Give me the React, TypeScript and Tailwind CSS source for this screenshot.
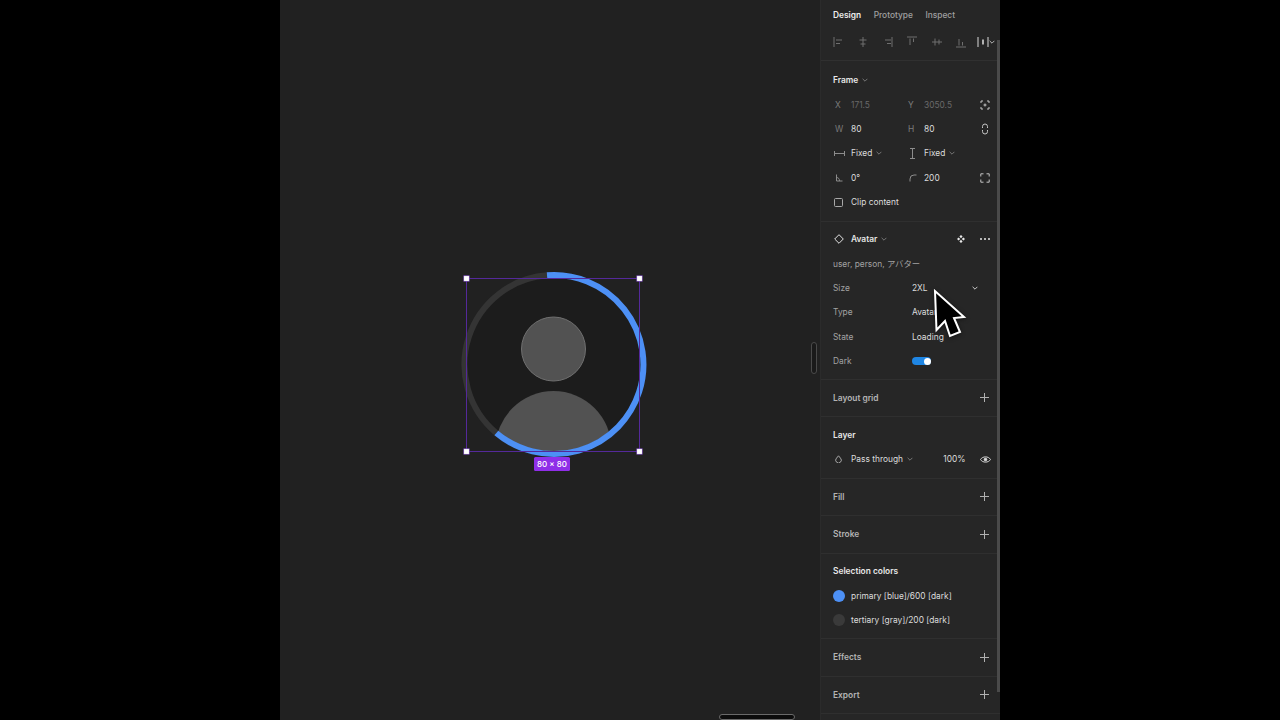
import React from "react";

type P = { children?: React.ReactNode; className?: string };

const Ico = ({ children, className = "", w = 12, h = 12 }: P & { w?: number; h?: number }) => (
  <svg width={w} height={h} viewBox={`0 0 ${w} ${h}`} fill="none" stroke="currentColor" strokeWidth="1" className={className}>
    {children}
  </svg>
);

const Chevron = ({ className = "text-[#8a8a8a]" }: P) => (
  <svg width="6" height="4" viewBox="0 0 6 4" fill="none" stroke="currentColor" strokeWidth="0.8" className={`ml-[4px] ${className}`}>
    <path d="M0.6 0.8 L3 3.2 L5.4 0.8" />
  </svg>
);

const Plus = () => (
  <svg width="9" height="9" viewBox="0 0 9 9" stroke="#b0b0b0" strokeWidth="1">
    <path d="M4.5 0 V9 M0 4.5 H9" />
  </svg>
);

const Section = ({ children, className = "" }: P) => (
  <div className={`flex flex-col justify-center border-b border-[#2f2f2f] ${className}`}>{children}</div>
);

const Row = ({ children, className = "" }: P) => (
  <div className={`flex h-[24.4px] items-center pl-[12px] shrink-0 ${className}`}>{children}</div>
);

const Cell = ({ icon, children, wide }: { icon?: React.ReactNode; children?: React.ReactNode; wide?: boolean }) => (
  <div className={`flex items-center ${wide ? "w-[73px]" : "w-[72px]"}`}>
    <div className="flex w-[18px] shrink-0 items-center justify-start pl-[1px] text-[#8c8c8c]">{icon}</div>
    {children}
  </div>
);

const Letter = ({ children }: P) => <span className="w-[10px] pl-[1px] text-[#7c7c7c]">{children}</span>;

const EndIcon = ({ children }: P) => <div className="flex w-[14px] items-center justify-center text-[#c4c4c4]">{children}</div>;

const Title = ({ children }: P) => <span className="font-semibold text-[#e8e8e8]">{children}</span>;
const SubTitle = ({ children }: P) => <span className="font-semibold text-[#b4b4b4]">{children}</span>;

const AddRow = ({ label }: { label: string }) => (
  <Row>
    <div className="flex-1">
      <SubTitle>{label}</SubTitle>
    </div>
    <div className="mr-[11px] flex w-[9px]">
      <Plus />
    </div>
  </Row>
);

const Prop = ({ label, value, extra }: { label: string; value: React.ReactNode; extra?: React.ReactNode }) => (
  <Row>
    <span className="w-[79px] text-[#a2a2a2]">{label}</span>
    <span className="w-[60px] text-[#dcdcdc]">{value}</span>
    {extra}
  </Row>
);

const AlignIcons = () => (
  <div className="flex h-[24px] items-center pl-[12px] text-[#6f6f6f]">
    <div className="flex w-[24.4px]"><Ico><path d="M1 1V11M3 4H9M3 7.5H7" /></Ico></div>
    <div className="flex w-[24.4px]"><Ico><path d="M6 1V11M2.5 4H9.5M3.5 8H8.5" /></Ico></div>
    <div className="flex w-[24.4px]"><Ico><path d="M10 1V11M3 4H9M5 7.5H9" /></Ico></div>
    <div className="flex w-[24.4px]"><Ico><path d="M1 1H11M4 2.5V9M7.5 2.5V6" /></Ico></div>
    <div className="flex w-[24.4px]"><Ico><path d="M1 6H11M4 2.5V9.5M8 3.5V8.5" /></Ico></div>
    <div className="flex w-[22px]"><Ico><path d="M1 11H11M4 3V9.5M7.5 6V9.5" /></Ico></div>
    <div className="flex items-center text-[#d8d8d8]">
      <Ico><path d="M1 1V11M11 1V11" /><path d="M6 3.5V8.5" strokeWidth="1.6" /></Ico>
      <svg width="6" height="4" viewBox="0 0 6 4" fill="none" stroke="currentColor" strokeWidth="0.8" className="ml-[0.5px]"><path d="M0.6 0.8 L3 3.2 L5.4 0.8" /></svg>
    </div>
  </div>
);

const Panel = () => (
  <aside className="relative flex h-full w-[180px] shrink-0 flex-col overflow-hidden border-l border-[#2b2b2b] bg-[#262626] text-[8.4px] leading-none">
    <div className="absolute right-0 top-[40px] h-[652px] w-[3px] bg-[#4a4a4a]" />
    <div className="flex h-[61px] shrink-0 flex-col border-b border-[#303030]">
      <div className="flex h-[30px] items-center gap-[12.5px] pl-[12px] font-medium">
        <span className="font-semibold text-[#ececec]">Design</span>
        <span className="text-[#a0a0a0]">Prototype</span>
        <span className="text-[#a0a0a0]">Inspect</span>
      </div>
      <AlignIcons />
    </div>

    <Section className="h-[160.8px] shrink-0 pt-[0.8px]">
      <Row>
        <Title>Frame</Title>
        <Chevron />
      </Row>
      <Row>
        <Cell wide icon={<Letter>X</Letter>}><span className="text-[#696969]">171.5</span></Cell>
        <Cell icon={<Letter>Y</Letter>}><span className="text-[#696969]">3050.5</span></Cell>
        <EndIcon>
          <Ico w={10} h={10}><path d="M1 3V1H3M7 1H9V3M9 7V9H7M3 9H1V7M3.5 5H6.5M5 3.5V6.5" /></Ico>
        </EndIcon>
      </Row>
      <Row>
        <Cell wide icon={<Letter>W</Letter>}><span className="text-[#dcdcdc]">80</span></Cell>
        <Cell icon={<Letter>H</Letter>}><span className="text-[#dcdcdc]">80</span></Cell>
        <EndIcon>
          <Ico w={8} h={12}><path d="M1.5 5V3.5A2.5 2.5 0 0 1 6.5 3.5V5M1.5 7V8.5A2.5 2.5 0 0 0 6.5 8.5V7" /></Ico>
        </EndIcon>
      </Row>
      <Row>
        <Cell wide icon={<Ico w={11} h={7}><path d="M0.5 1V6M10.5 1V6M0.5 3.5H10.5" /></Ico>}>
          <span className="text-[#dcdcdc]">Fixed</span><Chevron />
        </Cell>
        <Cell icon={<Ico w={7} h={11} className="ml-[2px]"><path d="M1 0.5H6M1 10.5H6M3.5 0.5V10.5" /></Ico>}>
          <span className="text-[#dcdcdc]">Fixed</span><Chevron />
        </Cell>
      </Row>
      <Row>
        <Cell wide icon={<Ico w={8} h={8} className="ml-[1px]"><path d="M1.5 0.5V7H7.5M1.5 3.5C3.5 3.5 4.5 5 4.5 7" /></Ico>}><span className="text-[#dcdcdc]">0°</span></Cell>
        <Cell icon={<Ico w={8} h={8} className="ml-[2px]"><path d="M1 7.5V5A4 4 0 0 1 5 1H7.5" /></Ico>}><span className="text-[#dcdcdc]">200</span></Cell>
        <EndIcon>
          <Ico w={10} h={10}><path d="M0.8 3.5V0.8H3.5M6.5 0.8H9.2V3.5M9.2 6.5V9.2H6.5M3.5 9.2H0.8V6.5" /></Ico>
        </EndIcon>
      </Row>
      <Row>
        <div className="flex w-[18px] shrink-0 items-center pl-[1px]">
          <div className="h-[9px] w-[9px] rounded-[1.5px] border border-[#a8a8a8]" />
        </div>
        <span className="text-[#dcdcdc]">Clip content</span>
      </Row>
    </Section>

    <Section className="h-[158px] shrink-0">
      <Row className="pr-[10px]">
        <div className="flex w-[18px] shrink-0 items-center pl-[1px] text-[#e4e4e4]">
          <Ico w={10} h={10}><path d="M5 0.7L9.3 5L5 9.3L0.7 5Z" /></Ico>
        </div>
        <span className="font-semibold text-[#e4e4e4]">Avatar</span>
        <Chevron />
        <div className="ml-auto flex items-center gap-[15px] text-[#e8e8e8]">
          <svg width="8" height="8" viewBox="0 0 8 8" fill="currentColor"><path d="M4 0L5.6 1.6L4 3.2L2.4 1.6ZM4 4.8L5.6 6.4L4 8L2.4 6.4ZM1.6 2.4L3.2 4L1.6 5.6L0 4ZM6.4 2.4L8 4L6.4 5.6L4.8 4Z" /></svg>
          <svg width="10" height="2" viewBox="0 0 10 2" fill="currentColor"><circle cx="1" cy="1" r="1" /><circle cx="5" cy="1" r="1" /><circle cx="9" cy="1" r="1" /></svg>
        </div>
      </Row>
      <Row>
        <span className="text-[#a2a2a2]">user, person, アバター</span>
      </Row>
      <Prop
        label="Size"
        value="2XL"
        extra={
          <svg width="6" height="4" viewBox="0 0 6 4" fill="none" stroke="#dcdcdc" strokeWidth="0.9"><path d="M0.6 0.8 L3 3.2 L5.4 0.8" /></svg>
        }
      />
      <Prop label="Type" value="Avatar" />
      <Prop label="State" value="Loading" />
      <Row>
        <span className="w-[79px] text-[#a2a2a2]">Dark</span>
        <div className="flex h-[8px] w-[19px] items-center justify-end rounded-full bg-[#1f86e4] pr-[0.5px]">
          <div className="h-[7px] w-[7px] rounded-full bg-white" />
        </div>
      </Row>
    </Section>

    <Section className="h-[37px] shrink-0"><AddRow label="Layout grid" /></Section>

    <Section className="h-[62px] shrink-0">
      <Row><Title>Layer</Title></Row>
      <Row className="pr-[9.5px]">
        <div className="flex w-[18px] shrink-0 items-center pl-[2px] text-[#a8a8a8]">
          <Ico w={7} h={8}><path d="M3.5 0.8L5.5 3.2A2.8 2.8 0 1 1 1.5 3.2Z" /></Ico>
        </div>
        <span className="text-[#dcdcdc]">Pass through</span>
        <Chevron />
        <span className="ml-auto text-[#dcdcdc]">100%</span>
        <svg width="11" height="7" viewBox="0 0 11 7" fill="none" stroke="#e4e4e4" strokeWidth="0.9" className="ml-[14px]">
          <path d="M0.5 3.5C2.5 0 8.5 0 10.5 3.5C8.5 7 2.5 7 0.5 3.5Z" />
          <circle cx="5.5" cy="3.5" r="1.3" fill="#e4e4e4" />
        </svg>
      </Row>
    </Section>

    <Section className="h-[37px] shrink-0"><AddRow label="Fill" /></Section>
    <Section className="h-[38px] shrink-0"><AddRow label="Stroke" /></Section>

    <Section className="h-[85px] shrink-0">
      <Row><Title>Selection colors</Title></Row>
      <Row>
        <div className="flex w-[18px] shrink-0 items-center">
          <div className="h-[12px] w-[12px] rounded-full bg-[#4d90f5]" />
        </div>
        <span className="text-[#dcdcdc]">primary [blue]/600 [dark]</span>
      </Row>
      <Row>
        <div className="flex w-[18px] shrink-0 items-center">
          <div className="h-[12px] w-[12px] rounded-full bg-[#3a3a3a]" />
        </div>
        <span className="text-[#dcdcdc]">tertiary [gray]/200 [dark]</span>
      </Row>
    </Section>

    <Section className="h-[38px] shrink-0"><AddRow label="Effects" /></Section>
    <Section className="h-[37px] shrink-0"><AddRow label="Export" /></Section>
  </aside>
);

const Handle = ({ x, y }: { x: number; y: number }) => (
  <rect x={x - 2.75} y={y - 2.75} width="5.5" height="5.5" fill="#ffffff" stroke="#6a35b0" strokeWidth="0.6" />
);

const Avatar = () => (
  <svg className="absolute left-[170px] top-[260px]" width="210" height="220" viewBox="450 260 210 220" fill="none">
    <defs>
      <clipPath id="disc">
        <circle cx="553.8" cy="364.5" r="87" />
      </clipPath>
    </defs>
    <circle cx="553.8" cy="364.5" r="87" fill="#1c1c1c" />
    <circle cx="553.5" cy="349" r="32" fill="#525252" stroke="#707070" strokeWidth="1" />
    <g clipPath="url(#disc)">
      <ellipse cx="553.5" cy="449" rx="58" ry="58" fill="#525252" />
    </g>
    <path d="M496.3 433 A89.5 89.5 0 0 1 547 275.3" stroke="#343434" strokeWidth="6" />
    <path d="M547 275.3 A89.5 89.5 0 1 1 496.3 433" stroke="#4d90f5" strokeWidth="6" />
    <rect x="466.5" y="278.5" width="173" height="173" stroke="#54299a" strokeWidth="1" />
    <Handle x={466.5} y={278.5} />
    <Handle x={639.5} y={278.5} />
    <Handle x={466.5} y={451.5} />
    <Handle x={639.5} y={451.5} />
  </svg>
);

const Canvas = () => (
  <main className="relative h-full w-[540px] shrink-0 overflow-hidden bg-[#212121]">
    <Avatar />
    <div className="absolute left-[254px] top-[457px] flex h-[14px] w-[36px] items-center justify-center rounded-[1.5px] bg-[#8f2ee8] text-[8px] font-medium leading-none text-white">
      80 × 80
    </div>
    <div className="absolute left-[531px] top-[342px] h-[32px] w-[6px] rounded-full border border-[#4a4a4a] bg-[#1a1a1a]" />
    <div className="absolute left-[439px] top-[714px] h-[6px] w-[76px] rounded-full border border-[#6a6a6a] bg-[#0c0c0c]" />
  </main>
);

const Cursor = () => (
  <svg className="absolute left-[925px] top-[282px]" width="50" height="60" viewBox="925 282 50 60" style={{ filter: "drop-shadow(0 1px 2px rgba(0,0,0,0.5))" }}>
    <path d="M935 291 L936.5 330 L945 321 L950 336 L960 332 L954 318 L964 317 Z" fill="#000000" stroke="#ffffff" strokeWidth="2" strokeLinejoin="miter" />
  </svg>
);

export default function App() {
  return (
    <div className="relative flex h-[720px] w-[1280px] overflow-hidden bg-black text-[#dcdcdc]" style={{ fontFamily: 'Inter, "Noto Sans CJK JP", sans-serif' }}>
      <div className="h-full w-[280px] shrink-0 bg-black" />
      <Canvas />
      <Panel />
      <div className="h-full w-[280px] shrink-0 bg-black" />
      <Cursor />
    </div>
  );
}
